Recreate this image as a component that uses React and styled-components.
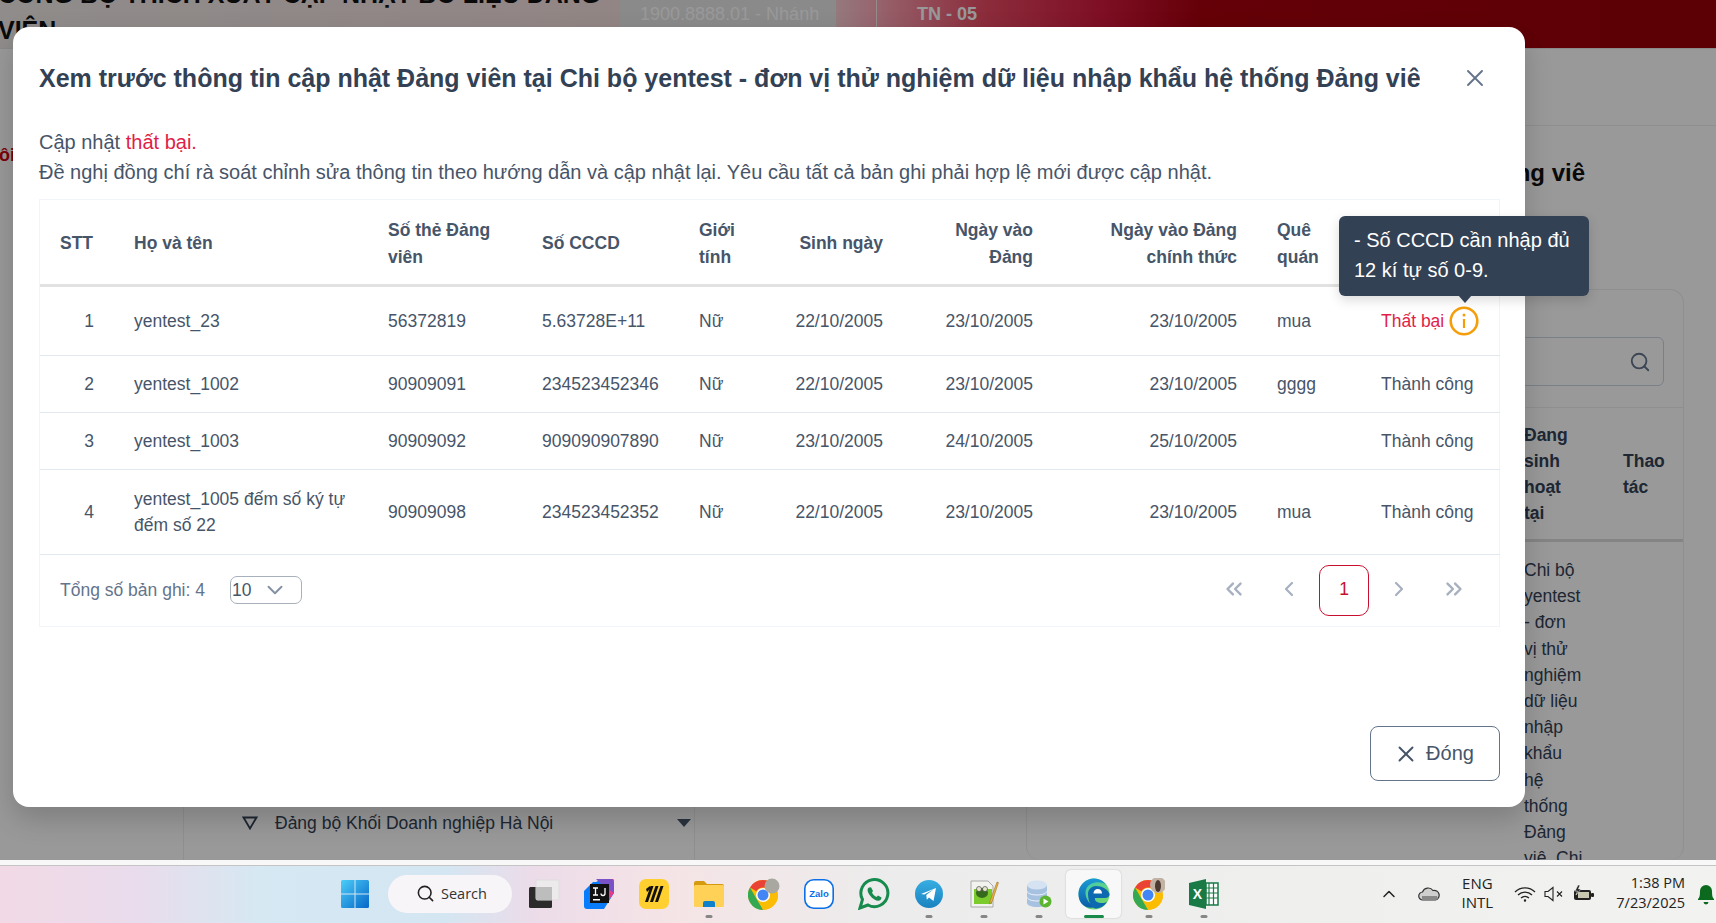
import React from 'react';
import styled, { createGlobalStyle } from 'styled-components';
import { X, ChevronsLeft, ChevronsRight, ChevronLeft, ChevronRight, ChevronDown, ChevronUp, Search } from 'lucide-react';

const Global = createGlobalStyle`
  html, body { margin: 0; padding: 0; width: 1716px; height: 923px; overflow: hidden; background: #fff; }
  * { box-sizing: border-box; }
  body { font-family: "Liberation Sans", Arial, sans-serif; }
`;

const Screen = styled.div`
  width: 1716px; height: 923px; display: flex; flex-direction: column; overflow: hidden;
`;
const Browser = styled.div`
  position: relative; height: 860px; flex: none; overflow: hidden; background: #fff;
`;
const AppHeader = styled.header`
  height: 49px; display: flex; align-items: flex-start; overflow: hidden; position: relative;
  background: linear-gradient(90deg, #efeae8 0%, #f5dada 47.8%, #fcacbb 50.7%, #e94b64 57.3%, #d31a3e 64.1%, #a8000d 70%, #99000a 100%);
  border-bottom: 1px solid #e4e4e4;
`;
const AppTitle = styled.h1`
  margin: -24px 0 0 -2px; width: 622px; flex: none; font-size: 25px; line-height: 36px; font-weight: 700; color: #111;
`;
const Hotline = styled.div`
  width: 216px; height: 27px; flex: none; background: #e6e6e6; color: #fff; font-size: 18px; padding: 4px 0 0 20px; white-space: nowrap;
`;
const HeaderGap = styled.div`
  width: 41px; height: 27px; flex: none; border-right: 1px solid #f4eaea;
`;
const HeaderCode = styled.div`
  color: #fff; font-size: 18px; font-weight: 700; padding: 4px 0 0 40px; white-space: nowrap;
`;
const AppBody = styled.div`
  display: flex; height: 811px; background: #fff; overflow: hidden;
`;
const SideNav = styled.nav`
  width: 184px; flex: none; padding-top: 96px; color: #d00010; font-size: 18px; font-weight: 700; white-space: nowrap; text-indent: -1px; overflow: hidden; border-right: 1px solid #eee;
`;
const TreePanel = styled.aside`
  width: 511px; flex: none; display: flex; align-items: flex-end; padding: 0 0 26px 58px; border-right: 1px solid #eee; margin-right: 31px; gap: 17px;
`;
const TreeLabel = styled.span`
  font-size: 17.5px; color: #334155; flex: 1; line-height: 22px; white-space: nowrap;
`;
const TreeCaret = styled.span`
  width: 0; height: 0; border-left: 7px solid transparent; border-right: 7px solid transparent; border-top: 8px solid #475569; margin: 0 3px 7px 0;
`;
const Main = styled.main`
  flex: 1; min-width: 0; display: flex; flex-direction: column;
`;
const MainTop = styled.div`
  height: 77px; border-bottom: 1px solid #eee; flex: none; margin-left: 700px;
`;
const MainHeading = styled.h2`
  margin: 33px 131px 0 0; font-size: 24px; line-height: 28px; font-weight: 700; color: #111; text-align: right; white-space: nowrap;
`;
const Card = styled.section`
  margin: 102px 32px 0 300px; flex: 1; border: 1px solid #eee; border-radius: 14px; border-bottom: 0; padding-top: 47px; min-height: 0; overflow: hidden;
`;
const SearchBox = styled.div`
  width: 300px; height: 49px; margin-left: 337px; border: 1px solid #cbd5e1; border-radius: 6px; display: flex; align-items: center; justify-content: flex-end; padding-right: 12px; color: #64748b;
`;
const BackTable = styled.div`
  margin-top: 21px; margin-left: 497px; border-top: 1px solid #eee; display: flex; flex-direction: column;
`;
const BackHead = styled.div`
  display: grid; grid-template-columns: 99px 60px; align-items: center; border-bottom: 3px solid #ddd; font-weight: 700; font-size: 17.5px; line-height: 26.2px; color: #334155; height: 134px; padding-top: 1px;
`;
const BackHeadCell = styled.div`
  width: 62px;
`;
const BackCell = styled.div`
  width: 58px; margin-top: 15px; font-size: 17.5px; line-height: 26.2px; color: #334155;
`;

const Overlay = styled.div`
  position: absolute; inset: 0; background: rgba(0,0,0,.4);
`;
const Modal = styled.div`
  position: absolute; left: 13px; top: 27px; width: 1512px; height: 780px; background: #fff; border-radius: 16px;
  padding: 0 25px 26px 26px; display: flex; flex-direction: column; box-shadow: 0 12px 28px rgba(0,0,0,.18); color: #475569;
`;
const ModalHead = styled.div`
  height: 92px; flex: none; display: flex; align-items: center; justify-content: space-between; padding-top: 10px;
`;
const ModalTitle = styled.h3`
  margin: 0; width: 1381px; overflow: hidden; white-space: nowrap; font-size: 25px; line-height: 32px; font-weight: 700; color: #334155;
`;
const CloseBtn = styled.button`
  border: 0; background: none; padding: 0; margin-right: 11px; width: 28px; height: 28px; color: #64748b; display: flex;
`;
const Message = styled.div`
  font-size: 20px; line-height: 30px; color: #475569; height: 80px; padding-top: 8px; flex: none;
`;
const Danger = styled.span`
  color: #e11d48;
`;
const TableWrap = styled.div`
  border: 1px solid #f1f5f9; position: relative; flex: none;
`;
const Table = styled.table`
  width: 100%; table-layout: fixed; border-collapse: collapse; font-size: 17.5px; color: #475569;
`;
const Th = styled.th`
  height: 85px; padding: 4px 20px 0 20px; border-bottom: 3px solid #e2e2e2; font-weight: 700; line-height: 27px; font-size: 17.5px; text-align: ${p => p.$right ? 'right' : 'left'}; color: #475569;
`;
const Tr = styled.tr`
  height: ${p => p.$h}px;
  border-bottom: 1px solid #e2e8f0;
`;
const Td = styled.td`
  padding: 0 ${p => p.$tight ? 0 : 20}px 0 ${p => p.$center ? 24 : 20}px; line-height: 26px; font-size: 17.5px; text-align: ${p => p.$right ? 'right' : p.$center ? 'center' : 'left'};
`;
const StatusFail = styled.span`
  color: #e11d48; display: inline-flex; align-items: center; gap: 5px; white-space: nowrap;
`;
const InfoWrap = styled.span`
  display: inline-flex;
`;
const Tooltip = styled.div`
  position: absolute; left: 1326px; top: 189px; width: 250px; height: 80px; background: #334155; color: #fff; border-radius: 6px; padding: 9px 15px; font-size: 20px; line-height: 30px; box-shadow: 0 4px 12px rgba(0,0,0,.15);
  &::after { content: ''; position: absolute; left: 119px; bottom: -7px; border-left: 7px solid transparent; border-right: 7px solid transparent; border-top: 8px solid #334155; }
`;
const Pager = styled.div`
  height: 71px; display: flex; align-items: center; padding: 0 20px 0 20px; font-size: 17.5px; color: #64748b;
`;
const Total = styled.span`
  margin-right: 25px;
`;
const PageSize = styled.div`
  width: 72px; height: 28px; border: 1px solid #a8b0bc; border-radius: 7px; display: flex; align-items: center; color: #475569; padding-left: 1px; gap: 11px;
`;
const Pages = styled.div`
  margin-left: auto; display: flex; gap: 5px;
`;
const PageBtn = styled.button`
  width: 50px; height: 51px; padding: 0 0 2px; background: #fff; border: 1px solid ${p => p.$active ? '#c8102e' : 'transparent'}; border-radius: 10px; font: 17.5px "Liberation Sans", sans-serif; color: ${p => p.$active ? '#c8102e' : '#a6b0c0'}; display: flex; align-items: center; justify-content: center;
`;
const ModalFoot = styled.div`
  margin-top: auto; display: flex; justify-content: flex-end;
`;
const CloseAction = styled.button`
  width: 130px; height: 55px; background: #fff; border: 1px solid #64748b; border-radius: 8px; display: flex; align-items: center; justify-content: center; gap: 7px; color: #475569; font: 20px "Liberation Sans", sans-serif; padding: 0 3px 0 0;
`;

const TaskbarTop = styled.div`
  height: 5px; flex: none; background: #f8f8f8;
`;
const Taskbar = styled.footer`
  height: 58px; flex: none; position: relative; display: flex; align-items: center; border-top: 1px solid #c4c4c4; padding-bottom: 2px;
  background: linear-gradient(90deg, #f2d9e6 0%, #e9dcec 8%, #d6e8f2 15%, #d4e6f2 26%, #ecdce9 31%, #f5e4e6 39%, #ececec 52%, #f2f2f0 100%);
`;
const TaskIcons = styled.div`
  display: flex; align-items: center; margin-left: 340px; height: 100%;
`;
const StartBtn = styled.div`
  width: 48px; display: flex; justify-content: flex-start;
`;
const SearchPill = styled.div`
  width: 124px; height: 38px; border-radius: 19px; background: #f8f5f8; display: flex; align-items: center; gap: 6px; padding-left: 28px; margin-right: 4px; font: 14.5px "Open Sans", sans-serif; color: #333;
`;
const AppSlot = styled.div`
  position: relative; width: 55px; height: 48px; display: flex; align-items: center; justify-content: center; border-radius: 5px;
  background: ${p => p.$active ? '#f8f8f8' : 'transparent'};
  box-shadow: ${p => p.$active ? '0 0 2px rgba(0,0,0,.2)' : 'none'};
  &::after { content: ''; display: ${p => p.$dot ? 'block' : 'none'}; position: absolute; bottom: 0; left: 50%; transform: translateX(-50%); width: ${p => p.$active ? 20 : 7}px; height: 3px; border-radius: 2px; background: ${p => p.$active ? '#1a8a4a' : '#868686'}; }
`;
const Tray = styled.div`
  margin-left: auto; display: flex; align-items: center; height: 100%; color: #222; font: 15px "Open Sans", sans-serif;
`;
const Lang = styled.div`
  font-size: 15px; line-height: 19px; text-align: center; width: 34px; margin: 0 19px 1px 19px;
`;
const Clock = styled.div`
  font-size: 14.5px; line-height: 20px; text-align: right; margin: 0 12px 1px 21px; white-space: nowrap;
`;
const TrayIcon = styled.span`
  display: flex; width: ${p => p.$w}px; justify-content: center; margin-right: ${p => p.$m || 0}px;
`;

const rows = [
  { id: 1, h: 70, name: 'yentest_23', the: '56372819', cccd: '5.63728E+11', g: 'Nữ', b: '22/10/2005', v: '23/10/2005', c: '23/10/2005', q: 'mua', fail: true },
  { id: 2, h: 57, name: 'yentest_1002', the: '90909091', cccd: '234523452346', g: 'Nữ', b: '22/10/2005', v: '23/10/2005', c: '23/10/2005', q: 'gggg' },
  { id: 3, h: 57, name: 'yentest_1003', the: '90909092', cccd: '909090907890', g: 'Nữ', b: '23/10/2005', v: '24/10/2005', c: '25/10/2005', q: '' },
  { id: 4, h: 85, name: 'yentest_1005 đếm số ký tự đếm số 22', the: '90909098', cccd: '234523452352', g: 'Nữ', b: '22/10/2005', v: '23/10/2005', c: '23/10/2005', q: 'mua' },
];
const cols = [74, 254, 154, 157, 96, 128, 150, 204, 104, 139];

const InfoIcon = () => (
  <svg width="30" height="30" viewBox="0 0 30 30"><circle cx="15" cy="15" r="13.300" fill="none" stroke="#f59e0b" strokeWidth="2.600"/><path d="M15 13v9" stroke="#f59e0b" strokeWidth="2.200"/><circle cx="15" cy="9" r="1.500" fill="#f59e0b"/></svg>
);
const Win = () => (
  <svg width="30" height="30" viewBox="0 0 30 30"><defs><linearGradient id="w" x1="0" y1="0" x2="1" y2="1"><stop offset="0" stopColor="#4ccdf8"/><stop offset="1" stopColor="#0567c8"/></linearGradient></defs><path d="M1 2.500A1.500 1.500 0 0 1 2.500 1H14.500V14.500H1ZM15.500 1H27.500A1.500 1.500 0 0 1 29 2.500V14.500H15.500ZM1 15.500H14.500V29H2.500A1.500 1.500 0 0 1 1 27.500ZM15.500 15.500H29V27.500A1.500 1.500 0 0 1 27.500 29H15.500Z" fill="url(#w)"/></svg>
);
const TaskView = () => (
  <svg width="32" height="32" viewBox="0 0 32 32"><rect x="1" y="9" width="23" height="21" rx="1.500" fill="#2b2b2b"/><rect x="8" y="2" width="23" height="20" rx="1.500" fill="#ececec" fillOpacity=".85" stroke="#ddd"/><rect x="8" y="9" width="16" height="13" fill="#bdbdbd"/></svg>
);
const Idea = () => (
  <svg width="30" height="30" viewBox="0 0 30 30"><path d="M0 12 9 3h3v27H3a3 3 0 0 1-3-3Z" fill="#087cfa"/><path d="M12 3 18 0h10a2 2 0 0 1 2 2v12L20 30H5V10Z" fill="#087cfa"/><path d="M18 0h10a2 2 0 0 1 2 2v12l-6 8Z" fill="#e5398b"/><path d="M12 0h16L30 4 30 14 18 6Z" fill="#7a52c7"/><rect x="6" y="5" width="19" height="19" fill="#111"/><path d="M9 9h5M11.500 9v7M9 16h5M21 9v5.500a2 2 0 0 1-4 0" stroke="#fff" strokeWidth="1.300" fill="none"/><rect x="9" y="20" width="7" height="1.500" fill="#fff"/></svg>
);
const Miro = () => (
  <svg width="30" height="30" viewBox="0 0 30 30"><rect width="30" height="30" rx="7" fill="#ffd02f"/><path d="M11.500 7h3L9 23H6ZM16.500 7h3L14 23h-3ZM21.500 7h3L19 23h-3Z" fill="#111"/><path d="M7 10l4-3v3l-3 3Z" fill="#111"/></svg>
);
const Folder = () => (
  <svg width="30" height="28" viewBox="0 0 30 28"><path d="M0 3a2 2 0 0 1 2-2h8l3 3h15a2 2 0 0 1 2 2v4H0Z" fill="#d69a10"/><rect y="5" width="30" height="22" rx="1.500" fill="#ffd257"/><path d="M9 23a2 2 0 0 1 2-2h8a2 2 0 0 1 2 2v4H9Z" fill="#0f80cc"/></svg>
);
const Chrome = ({ badge }) => (
  <svg width="32" height="32" viewBox="0 0 32 32"><circle cx="15" cy="17" r="15" fill="#fbbc04"/><path d="M15 2a15 15 0 0 1 13 7.500H15a7.500 7.500 0 0 0-6.500 3.750L2 9.500A15 15 0 0 1 15 2Z" fill="#ea4335"/><path d="M2 9.500 8.500 20.750 15 32A15 15 0 0 1 2 9.500Z" fill="#34a853"/><path d="M21.500 20.750 15 32a15 15 0 0 0 15-15H22a7.500 7.500 0 0 1-.5 3.750Z" fill="#fbbc04"/><circle cx="15" cy="17" r="7" fill="#fff"/><circle cx="15" cy="17" r="5.500" fill="#4285f4"/>{badge === 1 ? <circle cx="24" cy="8" r="7.500" fill="#a8a8a0"/> : null}{badge === 2 ? <g><circle cx="25" cy="7" r="8" fill="#c2b2a4"/><ellipse cx="25" cy="8" rx="3" ry="6" fill="#4d3a30"/></g> : null}</svg>
);
const Zalo = () => (
  <svg width="30" height="30" viewBox="0 0 30 30"><rect x=".8" y=".8" width="28.400" height="28.400" rx="9" fill="#fff" stroke="#0a6fe8" strokeWidth="1.600"/><text x="15" y="18" fontSize="9.500" fontWeight="700" fill="#0a6fe8" textAnchor="middle" fontFamily="Liberation Sans">Zalo</text></svg>
);
const Whatsapp = () => (
  <svg width="32" height="32" viewBox="0 0 32 32"><path d="M2 30 4.500 21.500A13.500 13.500 0 1 1 10 27Z" fill="none" stroke="#178a4e" strokeWidth="3"/><path d="M11 9.500c-2 1-2 4 1 8s7 6 9.500 5c1.500-.5 2-2 2-3l-3.500-2-1.500 1.500c-1.500-.5-4-3-4.500-4.500L15 13l-2-3.700Z" fill="#178a4e"/></svg>
);
const Telegram = () => (
  <svg width="28" height="28" viewBox="0 0 28 28"><defs><linearGradient id="tg" x1="0" y1="0" x2="0" y2="1"><stop offset="0" stopColor="#37aee2"/><stop offset="1" stopColor="#1a82c0"/></linearGradient></defs><circle cx="14" cy="14" r="14" fill="url(#tg)"/><path d="M6 14 21 8l-2.500 13-4.500-3.500-2.200 2.200-.5-4.700 7-5.500-9 5Z" fill="#fff"/></svg>
);
const Notepad = () => (
  <svg width="30" height="30" viewBox="0 0 30 30"><path d="M2 2h17l5 5v21H2Z" fill="#f2f2ee" stroke="#a9a9a9"/><rect x="5" y="10" width="18" height="15" fill="#7ccb2d"/><ellipse cx="13" cy="14" rx="6" ry="5" fill="#356a1c"/><circle cx="10" cy="10" r="2.500" fill="#e6e6d0" stroke="#333" strokeWidth=".6"/><circle cx="16" cy="10" r="2.500" fill="#e6e6d0" stroke="#333" strokeWidth=".6"/><path d="M21 22 28 3l1.500.6L23 23l-2.500 2Z" fill="#e8b13a" stroke="#92671c" strokeWidth=".5"/></svg>
);
const DbIcon = () => (
  <svg width="26" height="30" viewBox="0 0 26 30"><path d="M1 6v18c0 2 4 4 10 4s10-2 10-4V6Z" fill="#a7c1e0"/><ellipse cx="11" cy="6" rx="10" ry="4.500" fill="#d4e2f1"/><path d="M1 12c0 2 4 4 10 4s10-2 10-4M1 18c0 2 4 4 10 4s10-2 10-4" fill="none" stroke="#eef3f9" strokeWidth="1"/><circle cx="19.500" cy="22.500" r="6" fill="#5cb531"/><path d="m17.500 19.500 5 3-5 3Z" fill="#fff"/></svg>
);
const Edge = () => (
  <svg width="32" height="32" viewBox="0 0 32 32"><defs><linearGradient id="e1" x1="0" y1="0" x2="1" y2="1"><stop offset="0" stopColor="#33c6c0"/><stop offset="1" stopColor="#7fdc5a"/></linearGradient><linearGradient id="e2" x1="0" y1="0" x2="0" y2="1"><stop offset="0" stopColor="#1c9ad6"/><stop offset="1" stopColor="#0b5ea8"/></linearGradient></defs><circle cx="16" cy="16" r="15.500" fill="url(#e1)"/><path d="M.5 16C.5 7 8 .5 16 .5c5 0 9 2.300 12 6-6-4-17-3-20 5-2 6 2 15 10 17.500C8 32 .5 26 .5 16Z" fill="url(#e2)"/><path d="M10 16c0-5 4-8 8-8 6 0 12 3 13.500 8 0 3-2 4-5 4H17c-1 3 3 5 7 5 2 0 3.500-.5 5-1.500-2 4.500-7 7-12 7-5-2-7-9-7-14.500Z" fill="#0d6ab0"/><path d="M15.500 15.500c0-3 2-4.500 4-4.500 3 0 4.500 2 4.500 4.500Z" fill="#fff"/></svg>
);
const Excel = () => (
  <svg width="30" height="30" viewBox="0 0 30 30"><path d="M0 4 17 0v30L0 26Z" fill="#1a7a45"/><path d="M17 4h12v22H17Z" fill="#fff" stroke="#1a7a45" strokeWidth="1.500"/><path d="M20 4v22M24.500 4v22M17 9h12M17 14h12M17 19h12" stroke="#1a7a45" strokeWidth="1.200"/><text x="8.500" y="20" fontSize="14" fontWeight="700" textAnchor="middle" fill="#fff" fontFamily="Liberation Sans">X</text></svg>
);
const Cloud = () => (
  <svg width="22" height="14" viewBox="0 0 22 14"><path d="M5 13a4 4 0 0 1-.5-8A6 6 0 0 1 15 3.500 4.800 4.800 0 0 1 17.500 13Z" fill="#cfcfcf" stroke="#333" strokeWidth="1.200"/><path d="M4 9h15l1 3-2 1H4Z" fill="#888"/></svg>
);
const WifiIcon = () => (
  <svg width="22" height="16" viewBox="0 0 22 16" fill="none" stroke="#222" strokeWidth="1.300"><path d="M1 6a14 14 0 0 1 20 0M4 9a10 10 0 0 1 14 0M7 12a6 6 0 0 1 8 0"/><circle cx="11" cy="14.500" r="1.200" fill="#222" stroke="none"/></svg>
);
const Mute = () => (
  <svg width="20" height="16" viewBox="0 0 20 16" fill="none" stroke="#222" strokeWidth="1.100"><path d="M1 5.500h3L9 1.500v13l-5-4H1Z"/><path d="m13 5.500 5 5M18 5.500l-5 5"/></svg>
);
const Battery = () => (
  <svg width="22" height="18" viewBox="0 0 22 18"><rect x="1" y="5" width="17" height="10" rx="2" fill="#222"/><rect x="18" y="8" width="3" height="4" rx="1" fill="#222"/><rect x="5" y="7" width="11" height="6" fill="#c8c8b0"/><path d="M5 0 2 6h2.500L3 10l5-6H5.500L7 0Z" fill="#222" stroke="#f2f2f2" strokeWidth=".6"/></svg>
);
const BellIcon = () => (
  <svg width="18" height="22" viewBox="0 0 18 22"><path d="M1 16c1-1 2-2 2-8a6 6 0 0 1 12 0c0 6 1 7 2 8v1H1Z" fill="#0b6a1e"/><path d="M6.500 19h5a2.500 2.500 0 0 1-5 0Z" fill="#0b6a1e"/></svg>
);

export default function App() {
  return (
    <Screen>
      <Global />
      <Browser>
        <AppHeader>
          <AppTitle>CÔNG BỘ THÍCH XUẤT CẬP NHẬT BỔ LIỆU ĐẢNG VIÊN</AppTitle>
          <Hotline>1900.8888.01 - Nhánh</Hotline>
          <HeaderGap />
          <HeaderCode>TN - 05</HeaderCode>
        </AppHeader>
        <AppBody>
          <SideNav>ôi</SideNav>
          <TreePanel>
            <svg width="16" height="14" viewBox="0 0 16 14" style={{ marginBottom: 4 }}><path d="M1.500 1.500h13L8 12.500Z" fill="none" stroke="#334155" strokeWidth="1.800"/></svg>
            <TreeLabel>Đảng bộ Khối Doanh nghiệp Hà Nội</TreeLabel>
            <TreeCaret />
          </TreePanel>
          <Main>
            <MainTop />
            <MainHeading>Danh sách Đảng viê</MainHeading>
            <Card>
              <SearchBox><Search size={22} /></SearchBox>
              <BackTable>
                <BackHead>
                  <BackHeadCell>Đang sinh hoạt tại</BackHeadCell>
                  <BackHeadCell>Thao tác</BackHeadCell>
                </BackHead>
                <BackCell>Chi bộ yentest - đơn vị thử nghiệm dữ liệu nhập khẩu hệ thống Đảng viê.{'\u00a0'}Chi</BackCell>
              </BackTable>
            </Card>
          </Main>
        </AppBody>
        <Overlay />
        <Modal>
          <ModalHead>
            <ModalTitle>Xem trước thông tin cập nhật Đảng viên tại Chi bộ yentest - đơn vị thử nghiệm dữ liệu nhập khẩu hệ thống Đảng viên</ModalTitle>
            <CloseBtn><X size={28} strokeWidth={1.6} /></CloseBtn>
          </ModalHead>
          <Message>
            Cập nhật <Danger>thất bại.</Danger><br />
            Đề nghị đồng chí rà soát chỉnh sửa thông tin theo hướng dẫn và cập nhật lại. Yêu cầu tất cả bản ghi phải hợp lệ mới được cập nhật.
          </Message>
          <TableWrap>
            <Table>
              <colgroup>{cols.map((w, i) => <col key={i} style={{ width: w }} />)}</colgroup>
              <thead>
                <tr>
                  <Th>STT</Th><Th>Họ và tên</Th><Th>Số thẻ Đảng viên</Th><Th>Số CCCD</Th><Th>Giới tính</Th>
                  <Th $right>Sinh ngày</Th><Th $right>Ngày vào Đảng</Th><Th $right>Ngày vào Đảng chính thức</Th><Th>Quê quán</Th><Th />
                </tr>
              </thead>
              <tbody>
                {rows.map(r => (
                  <Tr key={r.id} $h={r.h}>
                    <Td $center $tight>{r.id}</Td>
                    <Td>{r.name}</Td>
                    <Td>{r.the}</Td>
                    <Td>{r.cccd}</Td>
                    <Td>{r.g}</Td>
                    <Td $right>{r.b}</Td>
                    <Td $right>{r.v}</Td>
                    <Td $right>{r.c}</Td>
                    <Td>{r.q}</Td>
                    <Td $tight>
                      {r.fail ? <StatusFail>Thất bại<InfoWrap><InfoIcon /></InfoWrap></StatusFail> : 'Thành công'}
                    </Td>
                  </Tr>
                ))}
              </tbody>
            </Table>
            <Pager>
              <Total>Tổng số bản ghi: 4</Total>
              <PageSize>10<ChevronDown size={26} strokeWidth={1.8} color="#8492a6" /></PageSize>
              <Pages>
                <PageBtn><ChevronsLeft size={26} strokeWidth={2.2} /></PageBtn>
                <PageBtn><ChevronLeft size={24} strokeWidth={2.2} /></PageBtn>
                <PageBtn $active>1</PageBtn>
                <PageBtn><ChevronRight size={24} strokeWidth={2.2} /></PageBtn>
                <PageBtn><ChevronsRight size={26} strokeWidth={2.2} /></PageBtn>
              </Pages>
            </Pager>
          </TableWrap>
          <ModalFoot>
            <CloseAction><X size={26} strokeWidth={1.8} />Đóng</CloseAction>
          </ModalFoot>
          <Tooltip>- Số CCCD cần nhập đủ 12 kí tự số 0-9.</Tooltip>
        </Modal>
      </Browser>
      <TaskbarTop />
      <Taskbar>
        <TaskIcons>
          <StartBtn><Win /></StartBtn>
          <SearchPill><Search size={19} color="#222" strokeWidth={2} />Search</SearchPill>
          <AppSlot><TaskView /></AppSlot>
          <AppSlot><Idea /></AppSlot>
          <AppSlot><Miro /></AppSlot>
          <AppSlot $dot><Folder /></AppSlot>
          <AppSlot><Chrome badge={1} /></AppSlot>
          <AppSlot><Zalo /></AppSlot>
          <AppSlot><Whatsapp /></AppSlot>
          <AppSlot $dot><Telegram /></AppSlot>
          <AppSlot $dot><Notepad /></AppSlot>
          <AppSlot $dot><DbIcon /></AppSlot>
          <AppSlot $dot $active><Edge /></AppSlot>
          <AppSlot $dot><Chrome badge={2} /></AppSlot>
          <AppSlot $dot><Excel /></AppSlot>
        </TaskIcons>
        <Tray>
          <TrayIcon $w={20} $m={18}><ChevronUp size={20} strokeWidth={1.8} /></TrayIcon>
          <TrayIcon $w={24}><Cloud /></TrayIcon>
          <Lang>ENG INTL</Lang>
          <TrayIcon $w={24} $m={6}><WifiIcon /></TrayIcon>
          <TrayIcon $w={22} $m={8}><Mute /></TrayIcon>
          <TrayIcon $w={22}><Battery /></TrayIcon>
          <Clock>1:38 PM<br />7/23/2025</Clock>
          <TrayIcon $w={18} $m={1}><BellIcon /></TrayIcon>
        </Tray>
      </Taskbar>
    </Screen>
  );
}
